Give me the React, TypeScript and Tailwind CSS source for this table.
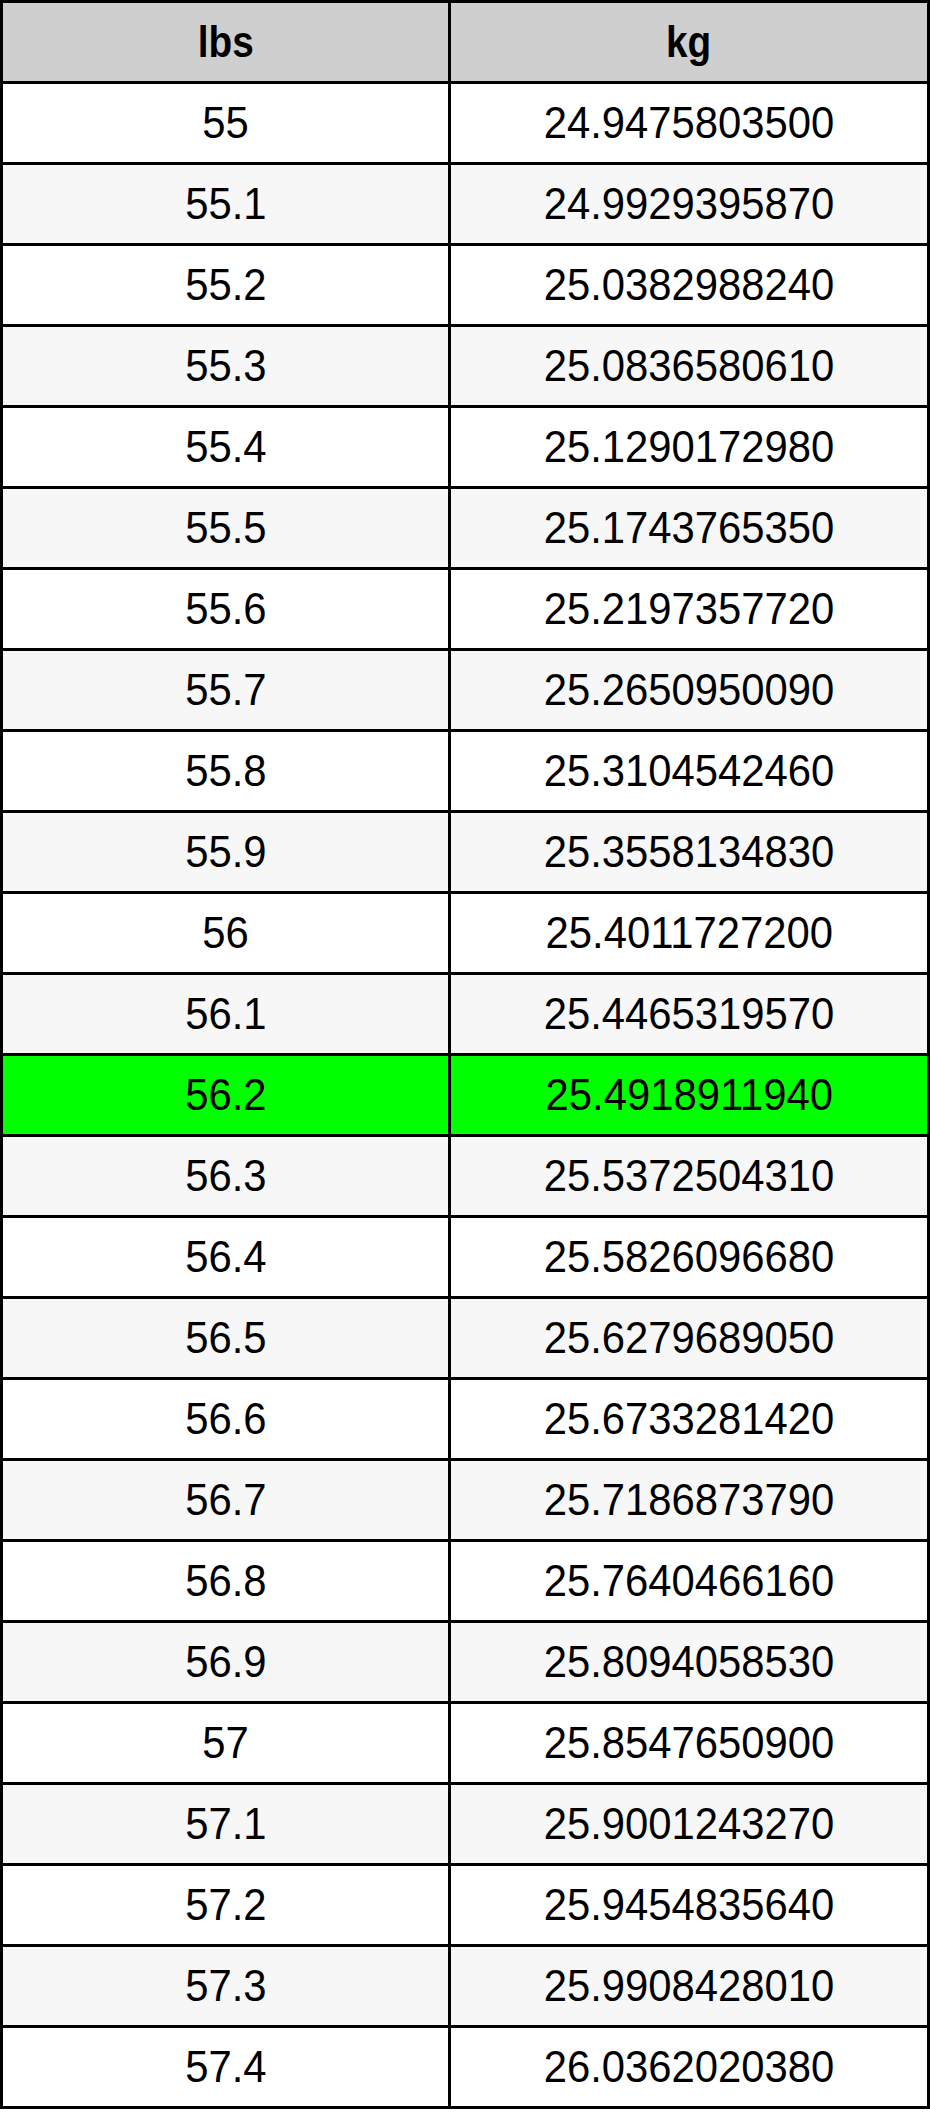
const ROWS: [string, string][] = [
  ["55", "24.9475803500"],
  ["55.1", "24.9929395870"],
  ["55.2", "25.0382988240"],
  ["55.3", "25.0836580610"],
  ["55.4", "25.1290172980"],
  ["55.5", "25.1743765350"],
  ["55.6", "25.2197357720"],
  ["55.7", "25.2650950090"],
  ["55.8", "25.3104542460"],
  ["55.9", "25.3558134830"],
  ["56", "25.4011727200"],
  ["56.1", "25.4465319570"],
  ["56.2", "25.4918911940"],
  ["56.3", "25.5372504310"],
  ["56.4", "25.5826096680"],
  ["56.5", "25.6279689050"],
  ["56.6", "25.6733281420"],
  ["56.7", "25.7186873790"],
  ["56.8", "25.7640466160"],
  ["56.9", "25.8094058530"],
  ["57", "25.8547650900"],
  ["57.1", "25.9001243270"],
  ["57.2", "25.9454835640"],
  ["57.3", "25.9908428010"],
  ["57.4", "26.0362020380"],
];

const HIGHLIGHT = "56.2";

// cell text is a touch narrower than plain Arial in the reference
function Cell({ children, bold }: { children: string; bold?: boolean }) {
  return (
    <span className={`inline-block ${bold ? "font-bold scale-x-[0.88]" : "scale-x-[0.95]"}`}>{children}</span>
  );
}

export default function App() {
  return (
    <div className="bg-white min-h-screen" style={{ fontFamily: '"Liberation Sans", Arial, sans-serif' }}>
      <div className="w-[930px] border-[3px] border-black text-black text-[44px] leading-none">
        {/* Header */}
        <div className="flex h-[81px] border-b-[3px] border-black bg-[#cfcfcf]">
          <div className="w-[448px] border-r-[3px] border-black flex items-center justify-center">
            <Cell bold>lbs</Cell>
          </div>
          <div className="flex-1 flex items-center justify-center">
            <Cell bold>kg</Cell>
          </div>
        </div>

        {ROWS.map(([lbs, kg], i) => {
          const bg = lbs === HIGHLIGHT ? "bg-[#00ff00]" : i % 2 === 0 ? "bg-white" : "bg-[#f7f7f7]";
          const last = i === ROWS.length - 1;
          return (
            <div
              key={lbs}
              className={`flex ${last ? "h-[78px]" : "h-[81px] border-b-[3px] border-black"} ${bg}`}
            >
              <div className="w-[448px] border-r-[3px] border-black flex items-center justify-center">
                <Cell>{lbs}</Cell>
              </div>
              <div className="flex-1 flex items-center justify-center">
                <Cell>{kg}</Cell>
              </div>
            </div>
          );
        })}
      </div>
    </div>
  );
}
